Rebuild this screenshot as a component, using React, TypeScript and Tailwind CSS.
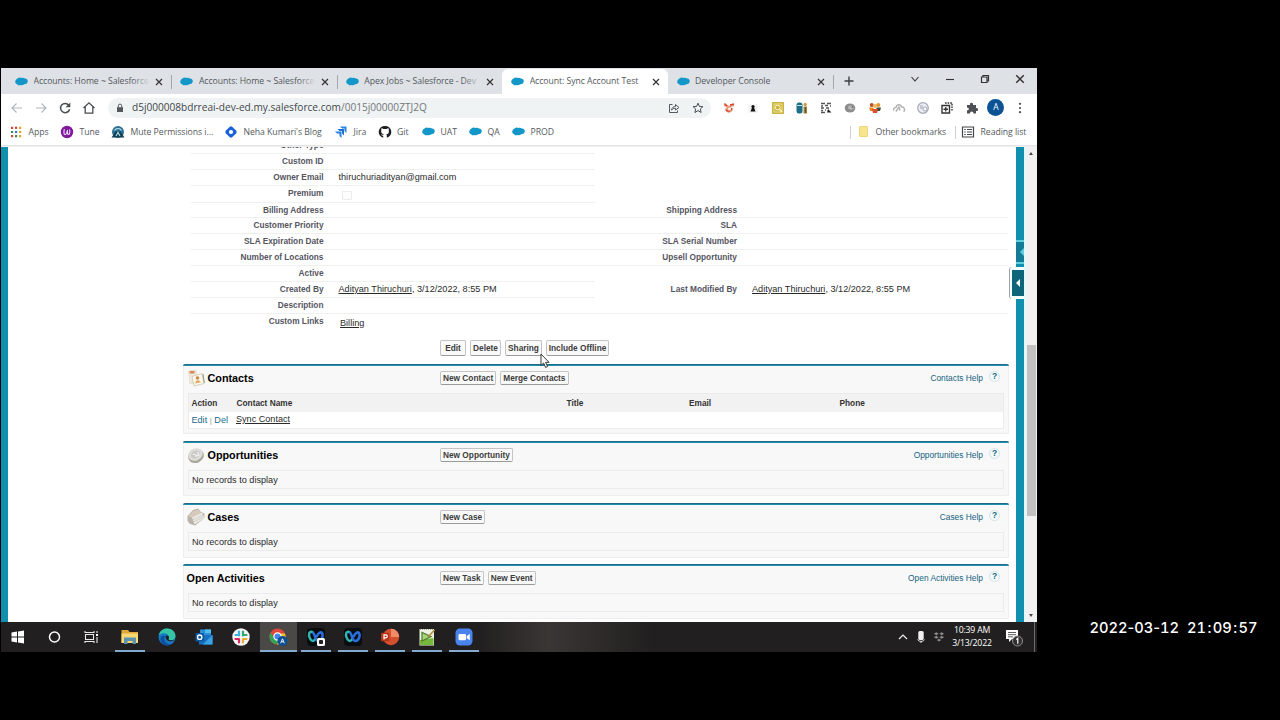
import type { ReactNode } from "react";

function Cloud() {
  return (
    <svg viewBox="0 0 26 18" className="h-[9px] w-[13px] shrink-0">
      <path d="M5 3C8 0 11 .8 13 2C15 1.200 18 1.500 20 3C24 3 26 6 25.500 9C25 13 21.500 14.500 18.500 14.500C16 16.500 13 17 11 16C8 17.500 5 16.500 4 14C1 13.500 .3 11 .5 8.500C1 6 2.500 4.500 5 3Z" fill="#1397c9" />
    </svg>
  );
}

function Cross({ className }: { className: string }) {
  return (
    <svg viewBox="0 0 8 8" className={className}>
      <path d="M1 1L7 7M7 1L1 7" stroke="currentColor" strokeWidth="1.2" fill="none" />
    </svg>
  );
}

function Tab({ title, active, faded }: { title: string; active?: boolean; faded?: boolean }) {
  return (
    <div
      className={
        "relative flex h-[25px] w-[165.400px] shrink-0 items-center pr-[8px] pl-[9px] " +
        (active ? "rounded-t-[6px] bg-white" : "")
      }
    >
      <Cloud />
      <div className="relative top-[0.500px] ml-[5.500px] flex-1 overflow-hidden text-[8.700px] tracking-[-0.060px] whitespace-nowrap text-[#54585c]">
        {title}
        {faded && <div className="absolute top-0 right-0 h-full w-[18px] bg-linear-to-r from-[#dee1e6]/0 to-[#dee1e6]" />}
      </div>
      <Cross className="ml-[5px] h-[8px] w-[8px] text-[#333]" />
      {!active && <div className="absolute right-[-1px] h-[14px] w-px bg-[#a4a8ad]" />}
    </div>
  );
}

function TabStrip() {
  return (
    <div className="flex h-[26px] items-end bg-[#dee1e6] pl-[5px]">
      <Tab title="Accounts: Home ~ Salesforce" faded />
      <Tab title="Accounts: Home ~ Salesforce" faded />
      <Tab title="Apex Jobs ~ Salesforce - Dev" faded />
      <Tab title="Account: Sync Account Test" active />
      <Tab title="Developer Console" />
      <svg viewBox="0 0 12 12" className="mb-[7px] ml-[10.500px] h-[12px] w-[12px]">
        <path d="M6 1.500V10.500M1.500 6H10.500" stroke="#3c4043" strokeWidth="1.400" />
      </svg>
      <div className="mr-[12.500px] mb-[10px] ml-auto flex items-center gap-[25px] text-[#333]">
        <svg viewBox="0 0 10 10" className="h-[10px] w-[10px]">
          <path d="M1.500 3L5 7L8.500 3" stroke="currentColor" strokeWidth="1.100" fill="none" />
        </svg>
        <svg viewBox="0 0 10 10" className="h-[10px] w-[10px]">
          <path d="M1 5.500H9" stroke="currentColor" strokeWidth="1.100" />
        </svg>
        <svg viewBox="0 0 10 10" className="h-[10px] w-[10px]">
          <path d="M1.500 3H7V8.500H1.500ZM3 3V1.500H8.500V7H7" stroke="currentColor" strokeWidth="1.200" fill="none" />
        </svg>
        <Cross className="h-[10px] w-[10px]" />
      </div>
    </div>
  );
}

function Cell({ children }: { children: ReactNode }) {
  return <div className="flex w-[24.250px] shrink-0 items-center justify-center">{children}</div>;
}

function Glyph({ children }: { children: ReactNode }) {
  return (
    <svg viewBox="0 0 14 14" className="h-[14px] w-[14px]" fill="none">
      {children}
    </svg>
  );
}

function Toolbar() {
  return (
    <div className="flex h-[27px] items-center bg-white pl-[3.500px]">
      <Cell>
        <Glyph>
          <path d="M12 7H2.500M6.500 2.500L2 7L6.500 11.500" stroke="#b4b6b9" strokeWidth="1.200" />
        </Glyph>
      </Cell>
      <Cell>
        <Glyph>
          <path d="M2 7H11.500M7.500 2.500L12 7L7.500 11.500" stroke="#b4b6b9" strokeWidth="1.200" />
        </Glyph>
      </Cell>
      <Cell>
        <Glyph>
          <path d="M10.800 4.200A4.600 4.600 0 1 0 11.600 8.200" stroke="#4a4d51" strokeWidth="1.500" />
          <path d="M12.300 1.500V6.200H7.600Z" fill="#4a4d51" />
        </Glyph>
      </Cell>
      <Cell>
        <Glyph>
          <path d="M1.500 7L7 1.800L12.500 7M3.200 6V12.200H10.800V6" stroke="#4a4d51" strokeWidth="1.300" />
        </Glyph>
      </Cell>
      <div className="ml-[6.500px] flex h-[20px] w-[603px] shrink-0 items-center rounded-full bg-[#f0f3f4] pl-[8px]">
        <svg viewBox="0 0 8 10" className="h-[10px] w-[8px]">
          <path d="M1 4.200H7V9H1Z" fill="#55585c" />
          <path d="M2.300 4.500V2.800A1.700 1.700 0 0 1 5.700 2.800V4.500" stroke="#55585c" fill="none" />
        </svg>
        <span className="ml-[8px] text-[10.100px] whitespace-nowrap text-[#43474b]">
          d5j000008bdrreai-dev-ed.my.salesforce.com<span className="text-[#73777b]">/0015j00000ZTJ2Q</span>
        </span>
        <svg viewBox="0 0 12 12" className="mr-[12px] ml-auto h-[12px] w-[12px]" fill="none" stroke="#55585c">
          <path d="M4.500 2.500H1.500V10.500H9.500V8.500" />
          <path d="M3.500 8C4 5.500 5.500 4.500 7.500 4.500V2.500L11 5.500L7.500 8V6.300C5.500 6.300 4.500 7 3.500 8Z" />
        </svg>
        <svg viewBox="0 0 12 12" className="mr-[7px] h-[12px] w-[12px]" fill="none" stroke="#4a4d51">
          <path d="M6 1.200L7.400 4.400L10.900 4.700L8.300 7L9.100 10.500L6 8.600L2.900 10.500L3.700 7L1.100 4.700L4.600 4.400Z" />
        </svg>
      </div>
      <div className="ml-[6px] flex items-center">
        <Cell>
          <Glyph>
            <path d="M2 3C1 5 3 6 5 6L3 8C4 13 10 13 11 8L8 6C11 6 13 5 12 3C10 4 9 3 7 5C6 3 3 4 2 3Z" fill="#e79a7b" />
            <path d="M2.500 2.500L5 5M4 9C6 11 9 10 10 7M8 4L12 3" stroke="#d8432e" strokeWidth="1.300" />
            <circle cx="7.500" cy="8" r="1.600" fill="#fff3e6" />
          </Glyph>
        </Cell>
        <Cell>
          <Glyph>
            <path d="M2 3H12V12H2Z" fill="#f4f4f4" />
            <circle cx="7" cy="5.500" r="1.600" fill="#111" />
            <path d="M6.200 6H7.800L9.500 10.500H4.500Z" fill="#111" />
          </Glyph>
        </Cell>
        <Cell>
          <Glyph>
            <rect x="1" y="1" width="12" height="12" rx="1" fill="#c9b53c" />
            <path d="M3 3H11V11H3Z" stroke="#eee09a" />
            <circle cx="6.700" cy="6.500" r="2.400" stroke="#fff8d0" />
            <path d="M8.500 8.300L11 11" stroke="#fff8d0" strokeWidth="1.300" />
          </Glyph>
        </Cell>
        <Cell>
          <Glyph>
            <rect x="1.500" y="1.500" width="6" height="11" rx="2.500" fill="#1c6f87" />
            <path d="M2 4.500H7" stroke="#b7e3ea" />
            <circle cx="10.200" cy="3.500" r="1.700" fill="#d19a45" />
            <path d="M8.500 5.500H12V12.500H8.500Z" fill="#b77b33" />
            <path d="M10.500 6V12" stroke="#2f6a3a" />
          </Glyph>
        </Cell>
        <Cell>
          <Glyph>
            <path d="M2 2.500H6M8 2.500H12M2 5H4M6 4.500H9M11 5H12M2 7H5M7 7H10M2 9.500H4M6 9H7M2 11.500H6" stroke="#555" strokeWidth="1.300" />
            <path d="M9 8L12.500 11.500H8Z" fill="#222" />
          </Glyph>
        </Cell>
        <Cell>
          <Glyph>
            <ellipse cx="7" cy="7" rx="5.300" ry="4.600" fill="#8d8d8d" />
            <ellipse cx="8" cy="6.500" rx="3" ry="2" fill="#b9b9b9" />
            <circle cx="9.500" cy="6" r="1" fill="#6f6f6f" />
          </Glyph>
        </Cell>
        <Cell>
          <Glyph>
            <circle cx="3.700" cy="4" r="2" fill="#b3542e" />
            <circle cx="10.300" cy="4" r="2" fill="#e0962e" />
            <circle cx="7" cy="5" r="2" fill="#f0b45c" />
            <path d="M1 6.500H5L7 10H2Z" fill="#ef8a1d" />
            <path d="M13 6.500H9L7 10H12Z" fill="#3c4a3b" />
            <path d="M4 8H10L9 12H5Z" fill="#d94e2b" />
          </Glyph>
        </Cell>
        <Cell>
          <Glyph>
            <path d="M1.500 9.500C1 6.500 4 6.500 4 7C4 3 9 2.500 9.500 6C12.500 5.500 13.500 9.500 11.500 10.500M4 10.500L7 6L8 9.500" stroke="#b0b0b0" strokeWidth="1.400" />
          </Glyph>
        </Cell>
        <Cell>
          <Glyph>
            <circle cx="7" cy="7" r="5.300" stroke="#a4a7b6" strokeWidth="1.200" fill="#eceef5" />
            <path d="M4 4H7V8H4Z" fill="#c4c8d8" />
            <circle cx="9" cy="8" r="2" fill="#fff" stroke="#a4a7b6" />
          </Glyph>
        </Cell>
        <Cell>
          <Glyph>
            <path d="M2 4.500H9.500V12H2Z" stroke="#333" strokeWidth="1.400" />
            <path d="M5.750 6V10.500M3.500 8.250H8" stroke="#333" strokeWidth="1.300" />
            <path d="M5 2H12V9.500" stroke="#333" strokeWidth="1.400" strokeDasharray="1.600 1" />
          </Glyph>
        </Cell>
        <Cell>
          <Glyph>
            <path d="M2 4H5C4.200 1 8.800 1 8 4H11V7C13.800 6.300 13.800 10.700 11 10V12.500H8.500C8.500 9.800 5 9.800 5 12.500H2V9.500C4.500 9.500 4.500 6.500 2 6.500Z" fill="#4d5054" />
          </Glyph>
        </Cell>
        <Cell>
          <div className="flex h-[17px] w-[17px] items-center justify-center rounded-full bg-[#0b5394] text-[8.500px] text-white">A</div>
        </Cell>
        <Cell>
          <Glyph>
            <circle cx="7" cy="2.800" r="1.100" fill="#4a4d51" />
            <circle cx="7" cy="7" r="1.100" fill="#4a4d51" />
            <circle cx="7" cy="11.200" r="1.100" fill="#4a4d51" />
          </Glyph>
        </Cell>
      </div>
    </div>
  );
}

function Bookmark({ icon, label, className }: { icon: ReactNode; label: string; className: string }) {
  return (
    <div className={"flex shrink-0 items-center " + className}>
      <div className="flex w-[14px] shrink-0 items-center justify-center">{icon}</div>
      <span className="ml-[5.500px] pt-px text-[8.700px] tracking-[-0.050px] whitespace-nowrap text-[#55595d]">{label}</span>
    </div>
  );
}

function BookmarkBar() {
  return (
    <div className="flex h-[25px] items-center border-b border-[#e3e4e6] bg-white pr-[10px] pb-[2px] pl-[8px]">
      <Bookmark
        className="w-[51px]"
        label="Apps"
        icon={
          <Glyph>
            <path d="M2 2.800H4.200M2 11.200H4.200" stroke="#d24b35" strokeWidth="2.200" />
            <path d="M6 2.800H8.200" stroke="#cf4a3a" strokeWidth="2.200" />
            <path d="M10 2.800H12.200M10 11.200H12.200" stroke="#d9a627" strokeWidth="2.200" />
            <path d="M2 7H4.200M6 11.200H8.200" stroke="#3c8e51" strokeWidth="2.200" />
            <path d="M6 7H8.200" stroke="#3f76c9" strokeWidth="2.200" />
            <path d="M10 7H12.200" stroke="#d9a627" strokeWidth="2.200" />
          </Glyph>
        }
      />
      <Bookmark
        className="w-[51px]"
        label="Tune"
        icon={
          <Glyph>
            <circle cx="7" cy="7" r="6.200" fill="#7d1a9c" />
            <path d="M4.300 4C3.500 8 4 10 5.500 9.500C7 9 7 6 7.500 5C7 9 8 10.500 9.300 8.800C10.300 7.500 10 6 9.500 4.500" stroke="#f1d6f7" strokeWidth="1.100" />
          </Glyph>
        }
      />
      <Bookmark
        className="w-[113px]"
        label="Mute Permissions i..."
        icon={
          <Glyph>
            <circle cx="7" cy="7" r="6" fill="#2c6f92" />
            <path d="M.5 12.500L5 6L7 8.500L9 6L13.500 12.500Z" fill="#133f55" />
            <path d="M3.500 5.500A4 4 0 0 1 10.500 5.500M5 11L7 7.500L9 11" stroke="#b8e5ee" strokeWidth="1.100" />
          </Glyph>
        }
      />
      <Bookmark
        className="w-[110px]"
        label="Neha Kumari's Blog"
        icon={
          <Glyph>
            <rect x="2.400" y="2.400" width="9.200" height="9.200" rx="2" transform="rotate(45 7 7)" fill="#1b62d6" />
            <circle cx="7" cy="7" r="2.100" fill="#fff" />
          </Glyph>
        }
      />
      <Bookmark
        className="w-[43.500px]"
        label="Jira"
        icon={
          <Glyph>
            <path d="M6 1.500H12.500V8L10.500 6V3.500H8Z" fill="#2b85e8" />
            <path d="M3.500 4H10V10.500L8 8.500V6H5.500Z" fill="#1f70d0" />
            <path d="M1 6.500H7.500V13L5.500 11V8.500H3Z" fill="#2480e6" />
          </Glyph>
        }
      />
      <Bookmark
        className="w-[43.500px]"
        label="Git"
        icon={
          <Glyph>
            <path d="M7 1A6 6 0 0 0 5.200 12.800V10.800C3.800 11.100 3.400 10 3 9.600C4.200 9.500 4.400 10.300 5.200 9.900C5.300 9.500 5.500 9.300 5.700 9.200C3.500 8.900 2.900 7.500 3.300 5.400C3.300 4.600 3.200 4 3.500 3.300C4.300 3.300 5 3.900 5.300 4H8.700C9 3.900 9.700 3.300 10.500 3.300C10.800 4 10.700 4.600 10.800 5.400C11.200 7.500 10.400 8.900 8.300 9.200C8.900 9.700 8.800 10.500 8.800 12.800A6 6 0 0 0 7 1Z" fill="#1b1f23" />
          </Glyph>
        }
      />
      <Bookmark className="w-[47px]" label="UAT" icon={<Cloud />} />
      <Bookmark className="w-[43px]" label="QA" icon={<Cloud />} />
      <Bookmark className="w-[60px]" label="PROD" icon={<Cloud />} />
      <div className="ml-auto h-[13px] w-px shrink-0 bg-[#cdd0d3]" />
      <Bookmark className="ml-[5px] w-[90px]" label="Other bookmarks" icon={<div className="h-[11px] w-[9px] rounded-[1px] border border-[#ecd67c] bg-[#f8e48f]" />} />
      <div className="ml-[9px] h-[13px] w-px shrink-0 bg-[#cdd0d3]" />
      <Bookmark
        className="ml-[5px] w-[66px]"
        label="Reading list"
        icon={
          <Glyph>
            <path d="M1.500 2H12.500V12H1.500Z" stroke="#44474b" strokeWidth="1.200" />
            <path d="M3.200 4.500H4.700M3.200 7H4.700M3.200 9.500H4.700M6 4.500H11M6 7H11M6 9.500H11" stroke="#44474b" strokeWidth="1.100" />
          </Glyph>
        }
      />
    </div>
  );
}

type Row = { label: string; value?: ReactNode; right?: string; rightValue?: ReactNode; height: string; line: "half" | "full" | "none" };

const stamp = (
  <>
    <span className="underline underline-offset-1">Adityan Thiruchuri</span>, 3/12/2022, 8:55 PM
  </>
);

const rows: Row[] = [
  { label: "Custom ID", height: "h-[16px]", line: "half" },
  { label: "Owner Email", value: "thiruchuriadityan@gmail.com", height: "h-[16px]", line: "half" },
  { label: "Premium", value: <div className="mt-[5px] ml-[3px] h-[9px] w-[10px] rounded-[1px] border border-[#ececec] bg-[#fdfdfd]" />, height: "h-[17px]", line: "half" },
  { label: "Billing Address", right: "Shipping Address", height: "h-[15px]", line: "full" },
  { label: "Customer Priority", right: "SLA", height: "h-[16px]", line: "full" },
  { label: "SLA Expiration Date", right: "SLA Serial Number", height: "h-[16px]", line: "full" },
  { label: "Number of Locations", right: "Upsell Opportunity", height: "h-[16px]", line: "full" },
  { label: "Active", height: "h-[16px]", line: "half" },
  { label: "Created By", value: stamp, right: "Last Modified By", rightValue: stamp, height: "h-[16px]", line: "half" },
  { label: "Description", height: "h-[16px]", line: "full" },
  { label: "Custom Links", value: <div className="mt-[1.500px] ml-[1.500px] underline underline-offset-1">Billing</div>, height: "h-[20px]", line: "none" },
];

function DetailRow({ row }: { row: Row }) {
  return (
    <div className={"ml-[8px] flex shrink-0 leading-[14px] whitespace-nowrap " + row.height}>
      <div className={"flex w-[404px] shrink-0 " + (row.line !== "none" ? "border-b border-[#f0f0f0]" : "")}>
        <div className="w-[132.500px] shrink-0 text-right text-[8.300px] font-bold text-[#55555f]">{row.label}</div>
        <div className="ml-[15px] text-[9.130px] text-[#2a2a2a]">{row.value}</div>
      </div>
      <div className={"flex w-[413px] shrink-0 " + (row.line === "full" ? "border-b border-[#f0f0f0]" : "")}>
        <div className="w-[142px] shrink-0 text-right text-[8.300px] font-bold text-[#55555f]">{row.right}</div>
        <div className="ml-[15px] text-[9.130px] text-[#2a2a2a]">{row.rightValue}</div>
      </div>
    </div>
  );
}

function Btn({ children, className }: { children: string; className: string }) {
  return (
    <div
      className={
        "flex items-center justify-center rounded-[2px] border border-[#c4c4c4] border-b-[#9a9a9a] bg-[#f9f9f9] text-[8.300px] font-bold whitespace-nowrap text-[#3c3c3c] " +
        className
      }
    >
      {children}
    </div>
  );
}

function Section({ title, icon, buttons, help, children, className }: { title: string; icon?: ReactNode; buttons: string[]; help: string; children: ReactNode; className: string }) {
  return (
    <div className={"flex w-[826px] shrink-0 flex-col border-x border-b border-[#eeeeee] bg-[#f8f8f8] " + className}>
      <div className="-mx-px h-[2px] shrink-0 rounded-t-[2px] border-b border-[#1f8fae] bg-[#236a85]" />
      <div className="flex h-[27px] shrink-0 items-start">
        <div className="flex h-[24px] w-[256px] shrink-0 items-center pl-[2.500px]">
          {icon && <div className="mr-[3px] h-[18px] w-[18px]">{icon}</div>}
          <span className="text-[10.800px] leading-[14px] font-bold text-black">{title}</span>
        </div>
        <div className="mt-[5px] flex gap-[4px]">
          {buttons.map((b) => (
            <Btn key={b} className="h-[14px] px-[2px]">
              {b}
            </Btn>
          ))}
        </div>
        <div className="mt-[4px] mr-[8px] ml-auto flex items-center">
          <span className="pt-[2px] text-[8.400px] leading-[12px] text-[#15647f]">{help}</span>
          <div className="mb-[1px] ml-[6px] flex h-[11px] w-[11px] items-center justify-center rounded-full border border-[#d3e3e8] bg-[#f4fafc] text-[8.500px] leading-none font-bold text-[#176b87]">?</div>
        </div>
      </div>
      {children}
    </div>
  );
}

function Empty() {
  return (
    <div className="mx-[4px] h-[19px] border border-[#ebebeb] bg-[#f8f8f8] pl-[3px] text-[9.150px] leading-[19px] text-[#2a2a2a]">No records to display</div>
  );
}

const contactIcon = (
  <svg viewBox="0 0 18 18" className="h-full w-full">
    <path d="M1.500 2L9 1.500L11 13L3 15Z" fill="#efe9dd" stroke="#ddd5c6" strokeWidth=".6" />
    <path d="M2.500 2H7.500V4.500H2.800Z" fill="#dc8a55" />
    <path d="M5 7.500L15 4.500L17 14.500L7 17Z" fill="#fbf7ea" stroke="#c9bfa8" strokeWidth=".7" />
    <circle cx="10.500" cy="9" r="1.800" fill="#c78b4e" />
    <path d="M8.200 14.500C8.500 10.500 12.500 10 13.700 13.300Z" fill="#e2a95f" />
    <path d="M16 5L17.300 14" stroke="#9a957f" />
  </svg>
);
const oppIcon = (
  <svg viewBox="0 0 18 18" className="h-full w-full">
    <ellipse cx="9" cy="10" rx="8" ry="6.800" transform="rotate(-25 9 10)" fill="#a9a79c" />
    <ellipse cx="8.500" cy="8.500" rx="7.500" ry="6" transform="rotate(-25 8.500 8.500)" fill="#dddcd8" />
    <ellipse cx="8.500" cy="8.500" rx="4.800" ry="3.600" transform="rotate(-25 8.500 8.500)" fill="#c9c8c4" />
    <path d="M6 8L10.500 9.500M10.500 6L12 9L8.500 10.500" stroke="#f6f6f2" strokeWidth="1.200" fill="none" />
  </svg>
);
const caseIcon = (
  <svg viewBox="0 0 18 18" className="h-full w-full">
    <path d="M.5 8L6 2L11 .5L14 4L17.500 5.500V10L8 17.500L3 16L.5 13Z" fill="#b9b4aa" />
    <path d="M1 8L6.500 3L11 1.500L14 5L6 10Z" fill="#d8cabb" />
    <path d="M5 9.500L15 4.500L17.500 10L7.500 16.500Z" fill="#e9e8e3" />
    <path d="M6 12L16 7M6.500 14L16.500 9" stroke="#cbc9c3" strokeWidth=".8" />
  </svg>
);

function Contacts() {
  return (
    <div className="mx-[4px] border border-[#ebebeb] bg-white text-[9.100px] text-[#2a2a2a]">
      <div className="flex h-[18px] items-center bg-[#f2f2f2] text-[8.300px] font-bold text-[#333]">
        <div className="mt-[1px] w-[47.500px] pl-[2.500px]">Action</div>
        <div className="w-[330px]">Contact Name</div>
        <div className="w-[122.500px]">Title</div>
        <div className="w-[150.500px]">Email</div>
        <div>Phone</div>
      </div>
      <div className="flex h-[16px] items-center">
        <div className="mt-[2px] w-[47px] pl-[2.500px] whitespace-nowrap text-[#1b6c8c]">
          Edit <span className="text-[8px] text-[#999]">|</span> Del
        </div>
        <div className="underline underline-offset-1">Sync Contact</div>
      </div>
    </div>
  );
}

function RecordPage() {
  return (
    <div className="relative flex h-[475px] shrink-0 overflow-hidden bg-white font-['Liberation_Sans',sans-serif]">
      <div className="w-[7px] shrink-0 bg-[#118fae]" />
      <div className="flex w-[1008px] shrink-0 flex-col pl-[175px]">
        <div className="ml-[8px] flex h-[7px] w-[404px] shrink-0 items-end border-b border-[#f0f0f0] leading-[14px]">
          <div className="flex h-[7px] w-[132.500px] items-end justify-end overflow-hidden text-[8.300px] font-bold text-[#55555f]">
            <div className="h-[15px] shrink-0">Other Type</div>
          </div>
        </div>
        {rows.map((r) => (
          <DetailRow key={r.label} row={r} />
        ))}
        <div className="mt-[6px] ml-[257px] flex shrink-0 gap-[4px]">
          <Btn className="h-[16px] w-[26px]">Edit</Btn>
          <Btn className="h-[16px] w-[31px]">Delete</Btn>
          <Btn className="h-[16px] w-[37px]">Sharing</Btn>
          <Btn className="h-[16px] w-[63px]">Include Offline</Btn>
        </div>
        <Section className="mt-[8px] h-[70px]" title="Contacts" icon={contactIcon} buttons={["New Contact", "Merge Contacts"]} help="Contacts Help">
          <Contacts />
        </Section>
        <Section className="mt-[7px] h-[55px]" title="Opportunities" icon={oppIcon} buttons={["New Opportunity"]} help="Opportunities Help">
          <Empty />
        </Section>
        <Section className="mt-[7px] h-[55px]" title="Cases" icon={caseIcon} buttons={["New Case"]} help="Cases Help">
          <Empty />
        </Section>
        <Section className="mt-[6px] h-[55px]" title="Open Activities" buttons={["New Task", "New Event"]} help="Open Activities Help">
          <Empty />
        </Section>
      </div>
      <div className="w-[8px] shrink-0 bg-[#118fae]" />
      <div className="w-[2px] shrink-0 bg-[#e2f8fa]" />
      <div className="flex flex-1 flex-col items-center bg-[#f1f1f1] pt-[5px] pr-[1px] pb-[5px]">
        <div className="h-0 w-0 border-x-[2.500px] border-b-[3px] border-x-transparent border-b-[#444]" />
        <div className="mt-[190px] h-[171px] w-[9px] bg-[#c2c1c1]" />
        <div className="mt-auto h-0 w-0 border-x-[2.500px] border-t-[3px] border-x-transparent border-t-[#444]" />
      </div>
      <div className="absolute top-[93px] left-[1015px] flex h-[24px] w-[8px] items-center justify-end border-y-2 border-[#5fcfe0] bg-[#137b95]">
        <div className="h-0 w-0 border-y-[4px] border-r-[4px] border-y-transparent border-r-[#5fcfe0]" />
      </div>
      <div className="absolute top-[120px] left-[1008px] flex h-[32px] w-[15px] items-center justify-end rounded-l-[3px] border-l border-[#9aa6aa] bg-[#f2fdfe]">
        <div className="flex h-[26px] w-[12px] items-center justify-center bg-[#0e6478]">
          <div className="h-0 w-0 border-y-[4px] border-r-[4px] border-y-transparent border-r-white" />
        </div>
      </div>
      <svg viewBox="0 0 10 16" className="absolute top-[206px] left-[539px] h-[16px] w-[10px]">
        <path d="M1 1V12.500L3.600 10L5.600 14.500L7.600 13.500L5.600 9.300H9Z" fill="#fff" stroke="#222" strokeWidth=".9" />
      </svg>
    </div>
  );
}

function Task({ children, open, current }: { children: ReactNode; open?: boolean; current?: boolean }) {
  return (
    <div className={"flex h-full w-[37.200px] shrink-0 flex-col items-center pt-[5px] " + (current ? "bg-[#4b4848]" : "")}>
      <svg viewBox="0 0 20 20" className="h-[20px] w-[20px] shrink-0" fill="none">
        {children}
      </svg>
      {open && <div className={"mt-auto h-[2px] bg-[#86a9cf] " + (current ? "w-full" : "w-[30px]")} />}
    </div>
  );
}

function Webex() {
  return (
    <>
      <rect x="1" y="1" width="18" height="18" rx="4" fill="#080d12" />
      <path d="M7 5.500C3 3 2 8 4 11.500C6 15.500 8.500 14 10 11" stroke="#2fb7b0" strokeWidth="2.500" />
      <path d="M6.500 5.500C9 6 9 14 12.500 14C16 14 17.500 8 16 6C14.500 4.500 12 6 10.500 10" stroke="#2a6fe0" strokeWidth="2.500" />
    </>
  );
}

function Taskbar() {
  return (
    <div className="flex h-[30px] shrink-0 items-center bg-[#221f20] font-['Open_Sans',sans-serif] text-white">
      <div className="-ml-[1.600px] flex h-full w-[872px] shrink-0 bg-linear-to-r from-[#221f20] from-55% via-[#393634] via-63% to-[#221f20] to-75%">
        <Task>
          <path d="M3.500 5.500L9 4.600V9.500H3.500ZM10 4.400L16 3.500V9.500H10ZM3.500 10.500H9V15.400L3.500 14.500ZM10 10.500H16V16.500L10 15.600Z" fill="#fff" />
        </Task>
        <Task>
          <circle cx="9.500" cy="10" r="5" stroke="#fff" strokeWidth="1.500" />
        </Task>
        <Task>
          <path d="M3.500 7.500H11.500V12.500H3.500ZM3 4V5.500H12V4M3 16V14.500H12V16M15 4V6M15 10V16" stroke="#e8e8e8" strokeWidth="1.100" />
          <path d="M14 7H16V9H14Z" fill="#fff" />
        </Task>
        <Task open>
          <path d="M1.500 3H8L9.500 5H18V16H1.500Z" fill="#e2a83a" />
          <path d="M1.500 6.500H18V16H1.500Z" fill="#f8d775" />
          <path d="M4 10.500H16V17H12.500V14H7.500V17H4Z" fill="#5b93ad" />
        </Task>
        <Task>
          <circle cx="10" cy="10" r="8.500" fill="#1679c4" />
          <path d="M1.800 8C3 3 7 1.500 10 1.500C15 1.500 18.500 5 18.500 9C18.500 12 16 13.500 13 13.200C11 13 11.500 11.500 12 10.500C12 7 8 5.500 5 6.500C3.500 7 2.500 7.500 1.800 8Z" fill="#35c5a4" />
          <path d="M8 9C6 12.500 8.500 17 14 17.500C9 20 3.500 17 3.500 12C3.500 10 5 8 8 9Z" fill="#0f4f9c" />
          <path d="M8.500 9.500C9.500 7.800 12 8.500 12 10.500C11.500 11.500 11 13 13 13.200C15 13.400 17 12.800 17.500 12.500C15 15.500 9 15 8.500 9.500Z" fill="#221f20" />
        </Task>
        <Task>
          <path d="M6 2.500H17V9H6Z" fill="#2a90d9" />
          <path d="M11 2.500H17V6H11Z" fill="#53bdf0" />
          <path d="M5 8H18.500V17.500H5Z" fill="#1870c0" />
          <path d="M18.500 8L9 17.500H18.500Z" fill="#3aa3e6" />
          <rect x="1.500" y="6" width="8.500" height="8.500" rx="1" fill="#0b57a4" />
          <circle cx="5.700" cy="10.200" r="2.200" stroke="#fff" strokeWidth="1.300" />
        </Task>
        <Task>
          <circle cx="10" cy="10" r="8.700" fill="#f5f5f5" />
          <path d="M8 4.500V8.500" stroke="#36b7e0" strokeWidth="2.200" strokeLinecap="round" />
          <path d="M4.500 8H8" stroke="#36b7e0" strokeWidth="2.200" strokeLinecap="round" />
          <path d="M12 4.500V8.500M12 8H15.500" stroke="#2fa878" strokeWidth="2.200" strokeLinecap="round" />
          <path d="M8 12V15.500M4.500 12H8" stroke="#d8265f" strokeWidth="2.200" strokeLinecap="round" />
          <path d="M12 12V15.500M12 12H15.500" stroke="#e2ac33" strokeWidth="2.200" strokeLinecap="round" />
        </Task>
        <Task open current>
          <circle cx="9.500" cy="9.500" r="8" fill="#e0473b" />
          <path d="M2.500 5.500A8 8 0 0 0 8.500 17.500L12 11.500L6.500 11Z" fill="#35a353" />
          <path d="M17 6.500A8 8 0 0 1 9 17.500L13 9.500L10 6.500Z" fill="#f0c22f" />
          <circle cx="9.500" cy="9.500" r="3.600" fill="#4785e8" stroke="#fff" strokeWidth="1.200" />
          <circle cx="14.500" cy="14" r="5" fill="#0b4f95" />
          <path d="M12.700 16.200L14.500 11.800L16.300 16.200M13.400 14.800H15.600" stroke="#fff" strokeWidth=".9" />
        </Task>
        <Task open>
          <Webex />
          <rect x="11" y="11" width="8" height="8" rx="1.500" fill="#fff" />
          <rect x="13" y="13" width="4" height="4" rx="1" fill="#222" />
        </Task>
        <Task open>
          <Webex />
        </Task>
        <Task open>
          <circle cx="11" cy="10" r="8.200" fill="#d4502f" />
          <path d="M11 1.800A8.200 8.200 0 0 1 19.200 10H11Z" fill="#f18a68" />
          <rect x="1" y="5.800" width="8.500" height="8.500" rx="1" fill="#b8351a" />
          <path d="M4 12.500V7.800H5.800A1.500 1.500 0 0 1 5.800 10.800H4" stroke="#fff" strokeWidth="1.200" />
        </Task>
        <Task open>
          <path d="M2.500 2H17V18.500H2.500Z" fill="#eef2e4" />
          <path d="M3 2.500H17" stroke="#9da88c" strokeDasharray="1 1" />
          <path d="M3 13L16.500 11V18H3Z" fill="#76b83a" />
          <path d="M5 5.500V14L14 9.500Z" fill="#a9d47c" stroke="#4c7d2b" strokeWidth="1.200" />
          <path d="M17.500 3L11 10" stroke="#b58b39" strokeWidth="1.600" />
        </Task>
        <Task open>
          <rect x="1.500" y="1.500" width="17" height="17" rx="4.500" fill="#4a83ee" />
          <rect x="4.500" y="7" width="7.500" height="6.200" rx="1.300" fill="#fff" />
          <path d="M12.700 9L15.800 7V13.200L12.700 11.200Z" fill="#fff" />
        </Task>
      </div>
      <div className="ml-auto flex h-full shrink-0 items-center">
        <svg viewBox="0 0 10 10" className="h-[10px] w-[10px]">
          <path d="M1 7L5 3L9 7" stroke="#eee" strokeWidth="1.200" fill="none" />
        </svg>
        <svg viewBox="0 0 10 14" className="ml-[8px] h-[14px] w-[10px]">
          <rect x="2.300" y="1" width="5.400" height="9" rx="1.500" fill="#f2f2f2" />
          <path d="M1.500 9.500C2.500 12 7.500 12 8.500 9.500M5 11V13" stroke="#ddd" fill="none" />
        </svg>
        <svg viewBox="0 0 12 12" className="ml-[7px] h-[12px] w-[12px]">
          <path d="M3.300 1L6 2.700L3.300 4.400L.6 2.700ZM8.700 1L11.400 2.700L8.700 4.400L6 2.700ZM3.300 4.600L6 6.300L3.300 8L.6 6.300ZM8.700 4.600L11.400 6.300L8.700 8L6 6.300ZM6 7.500L8.500 9L6 10.800L3.500 9Z" fill="#8d8d8d" stroke="#221f20" strokeWidth=".5" />
        </svg>
        <div className="ml-[4px] w-[46px] text-center text-[8.700px] leading-[13.500px] tracking-[-0.200px] whitespace-nowrap">
          <div>10:39 AM</div>
          <div>3/13/2022</div>
        </div>
        <svg viewBox="0 0 20 20" className="ml-[9px] h-[20px] w-[20px]">
          <path d="M2 3H14V12H8L5 15V12H2Z" fill="#fff" />
          <path d="M4 5.500H12M4 7.700H12M4 9.800H9" stroke="#333" strokeWidth=".8" />
          <circle cx="13.500" cy="14" r="5" fill="#333031" stroke="#9a9a9a" strokeWidth=".9" />
          <path d="M12.300 12.500L13.800 11.300V16.800" stroke="#fff" strokeWidth="1.200" fill="none" />
        </svg>
        <div className="mr-[2px] ml-[10px] h-full w-px bg-[#6f6c6c]" />
      </div>
    </div>
  );
}

function Mark({ children }: { children: string }) {
  return <span className="inline-block w-[6.700px] text-center normal-nums">{children}</span>;
}

export default function App() {
  return (
    <div className="flex h-[720px] w-[1280px] overflow-hidden bg-black pt-[68px] pl-[1px]">
      <div className="flex h-[584px] w-[1036px] shrink-0 flex-col overflow-hidden font-['Open_Sans',sans-serif]">
        <TabStrip />
        <Toolbar />
        <BookmarkBar />
        <div className="h-px shrink-0 bg-[#f0f0f0]" />
        <RecordPage />
        <Taskbar />
      </div>
      <div className="mt-[549px] ml-[52.500px] flex font-['Inter',sans-serif] text-[14.700px] leading-[22px] font-medium whitespace-pre text-white tabular-nums">
        <div>
          2022
          <Mark>-</Mark>
          03
          <Mark>-</Mark>
          12
        </div>
        <div className="ml-[8px]">
          21
          <Mark>:</Mark>
          09
          <Mark>:</Mark>
          57
        </div>
      </div>
    </div>
  );
}
